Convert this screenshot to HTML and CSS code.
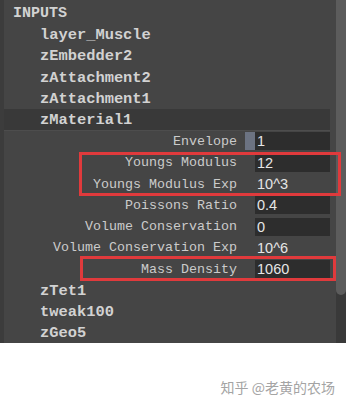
FILE: index.html
```html
<!DOCTYPE html>
<html>
<head>
    <title>Attribute Editor - zMaterial1</title>
    <link rel="stylesheet" href="styles.css">
</head>
<body>
<div class="panel">
    <div class="tree">
        <div class="row head">INPUTS</div>
        <div class="row node">layer_Muscle</div>
        <div class="row node">zEmbedder2</div>
        <div class="row node">zAttachment2</div>
        <div class="row node">zAttachment1</div>
        <div class="row node selected">zMaterial1</div>

        <div class="row attr">
            <span class="label">Envelope</span>
            <span class="slider on"></span>
            <span class="field">1</span>
        </div>
        <div class="row attr">
            <span class="label">Youngs Modulus</span>
            <span class="slider"></span>
            <span class="field">12</span>
        </div>
        <div class="row attr">
            <span class="label">Youngs Modulus Exp</span>
            <span class="slider"></span>
            <span class="field plain">10^3</span>
        </div>
        <div class="row attr">
            <span class="label">Poissons Ratio</span>
            <span class="slider"></span>
            <span class="field">0.4</span>
        </div>
        <div class="row attr">
            <span class="label">Volume Conservation</span>
            <span class="slider"></span>
            <span class="field">0</span>
        </div>
        <div class="row attr">
            <span class="label">Volume Conservation Exp</span>
            <span class="slider"></span>
            <span class="field plain">10^6</span>
        </div>
        <div class="row attr">
            <span class="label">Mass Density</span>
            <span class="slider"></span>
            <span class="field">1060</span>
        </div>

        <div class="row node">zTet1</div>
        <div class="row node">tweak100</div>
        <div class="row node">zGeo5</div>
    </div>
    <div class="scrollbar"><div class="thumb"></div></div>

    <!-- red annotation boxes drawn over the screenshot -->
    <div class="mark mark-youngs"></div>
    <div class="mark mark-density"></div>
</div>
<div class="footer">
    <span class="watermark">知乎 @老黄的农场</span>
</div>
</body>
</html>
```

FILE: styles.css
```css
body {
	margin: 0;
	background-color: #ffffff;
	font-family: "Liberation Sans", Arial, sans-serif;
}

.panel {
	position: relative;
	display: flex;
	height: 343px;
	background-color: #454545;
	border-left: 4px solid #3c3c3c;
	overflow: hidden;
}

.tree {
	flex: 1;
	padding: 3px 6px 0 0;
}

.row {
	height: 21.3px;
	display: flex;
	align-items: center;
}

.head,
.node {
	font-family: "Liberation Mono", "Courier New", monospace;
	font-weight: bold;
	font-size: 15.4px;
	color: #d2d2d2;
}

.head {
	padding-left: 9px;
	font-size: 15px;
}

.node {
	padding-left: 36px;
}

.selected {
	background-color: #393939;
	border-bottom: 1px solid #4d4d4d;
	box-sizing: border-box;
}

.attr .label {
	width: 233px;
	text-align: right;
	font-family: "Liberation Mono", "Courier New", monospace;
	font-size: 13.33px;
	color: #cbcbcb;
}

.slider {
	width: 10px;
	height: 18px;
	margin-left: 8px;
}

.slider.on {
	background-color: #6c7382;
}

.field {
	width: 73px;
	height: 18px;
	line-height: 18px;
	padding-left: 2px;
	background-color: #2d2d2d;
	font-size: 14.5px;
	color: #e6e6e6;
}

.field.plain {
	background-color: transparent;
}

.scrollbar {
	width: 12px;
	background-color: #393939;
}

.thumb {
	height: 295px;
	background-color: #5c5c5c;
	border-radius: 0 0 5px 5px;
}

.mark {
	position: absolute;
	border: 3px solid #e03a3c;
	box-sizing: border-box;
}

.mark-youngs {
	left: 75px;
	top: 152px;
	width: 262px;
	height: 44px;
}

.mark-density {
	left: 76px;
	top: 256px;
	width: 256px;
	height: 25px;
}

.footer {
	height: 65px;
	display: flex;
	justify-content: flex-end;
	align-items: center;
	padding-right: 11px;
}

.watermark {
	font-family: "Noto Sans CJK SC", sans-serif;
	font-size: 14px;
	color: #a4a4a4;
	margin-top: 22px;
}
```
